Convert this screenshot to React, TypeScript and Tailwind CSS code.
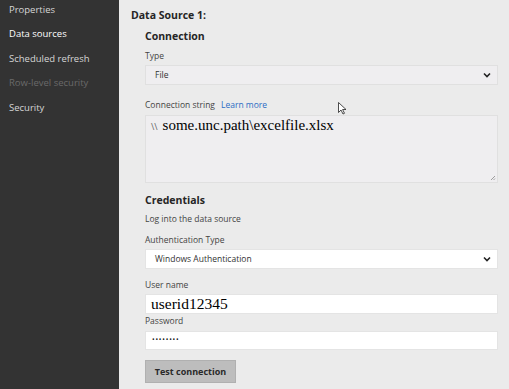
import React from "react";

const navItems = [
  { label: "Properties", color: "text-[#d6d6d6]" },
  { label: "Data sources", color: "text-white" },
  { label: "Scheduled refresh", color: "text-[#d6d6d6]" },
  { label: "Row-level security", color: "text-[#6a6a6a]" },
  { label: "Security", color: "text-[#d6d6d6]" },
];

const ui = { fontFamily: '"Open Sans", "Noto Sans", sans-serif' };
const serif = { fontFamily: '"Liberation Serif", "Times New Roman", serif' };

function Chevron() {
  return (
    <svg width="8" height="6" viewBox="0 0 8 6" className="text-[#222]">
      <path d="M1 1.5 L4 4.5 L7 1.5" fill="none" stroke="currentColor" strokeWidth="1.6" />
    </svg>
  );
}

function Label({ children, className = "" }: { children: React.ReactNode; className?: string }) {
  return <div className={`text-[8.5px] leading-[12px] text-[#444] ${className}`}>{children}</div>;
}

export default function App() {
  return (
    <div className="flex w-[509px] h-[389px] overflow-hidden bg-[#ebebeb]" style={ui}>
      {/* Sidebar */}
      <div className="w-[119px] shrink-0 bg-[#333333] pl-[9px]">
        <div className="-mt-[2px] flex flex-col">
          {navItems.map((item) => (
            <div key={item.label} className={`h-[24.4px] flex items-center text-[9.5px] ${item.color}`}>
              {item.label}
            </div>
          ))}
        </div>
      </div>

      {/* Main */}
      <div className="relative flex-1 pt-[7px] pl-[12px] pr-[11px]">
        <div className="text-[10.5px] leading-[16px] font-bold text-[#252525]">Data Source 1:</div>
        <div className="pl-[14px]">
          <div className="mt-[5px] text-[10.5px] leading-[16px] font-bold text-[#252525]">Connection</div>
          <Label className="mt-[6px]">Type</Label>
          <div className="mt-[3px] h-[20px] flex items-center justify-between bg-[#efeef0] border border-[#e0e0e0] pl-[9px] pr-[6px]">
            <span className="text-[8.5px] text-[#333]">File</span>
            <Chevron />
          </div>

          <Label className="mt-[14px] flex gap-[6px]">
            <span>Connection string</span>
            <span className="text-[#2b6cc4]">Learn more</span>
          </Label>
          <div className="relative mt-[4px] h-[68px] bg-[#efeef0] border border-[#e0e0e0] pl-[5px]">
            <div className="flex items-baseline">
              <span className="text-[9px] text-[#666] mr-[5px]">\\</span>
              <span className="text-[15px] leading-[18px] text-black" style={serif}>
                some.unc.path\excelfile.xlsx
              </span>
            </div>
            <svg width="6" height="6" viewBox="0 0 6 6" className="absolute right-[1px] bottom-[1px]">
              <path d="M5 1 L1 5 M5 3.5 L3.5 5" stroke="#888" strokeWidth="0.8" />
            </svg>
          </div>

          <div className="mt-[9px] text-[10.5px] leading-[16px] font-bold text-[#252525]">Credentials</div>
          <Label className="mt-[5px]">Log into the data source</Label>
          <Label className="mt-[9px]">Authentication Type</Label>
          <div className="mt-[3px] h-[20px] flex items-center justify-between bg-white border border-[#e4e4e4] pl-[9px] pr-[6px]">
            <span className="text-[8.5px] text-[#333]">Windows Authentication</span>
            <Chevron />
          </div>

          <Label className="mt-[10px]">User name</Label>
          <div className="mt-[3px] h-[20px] flex items-center bg-white border border-[#e4e4e4] pl-[5px]">
            <span className="text-[15.5px] leading-[18px] text-black" style={serif}>
              userid12345
            </span>
          </div>
          <Label className="mt-[1px]">Password</Label>
          <div className="mt-[4px] h-[19px] flex items-center bg-white border border-[#e4e4e4] pl-[6px]">
            <span className="text-[7px] tracking-[0.8px] text-[#222]">••••••••</span>
          </div>

          <button className="mt-[10px] h-[23px] w-[91px] bg-[#bdbdbd] border border-[#b0b0b0] text-[9px] font-bold text-[#2a2a2a]">
            Test connection
          </button>
        </div>

        {/* mouse pointer */}
        <svg width="9" height="13" viewBox="0 0 9 13" className="absolute left-[219px] top-[102px]">
          <path d="M0.5 0.5 L0.5 10.5 L3 8 L5 12 L6.5 11.3 L4.6 7.5 L8 7.5 Z" fill="white" stroke="#222" strokeWidth="0.8" />
        </svg>
      </div>
    </div>
  );
}
